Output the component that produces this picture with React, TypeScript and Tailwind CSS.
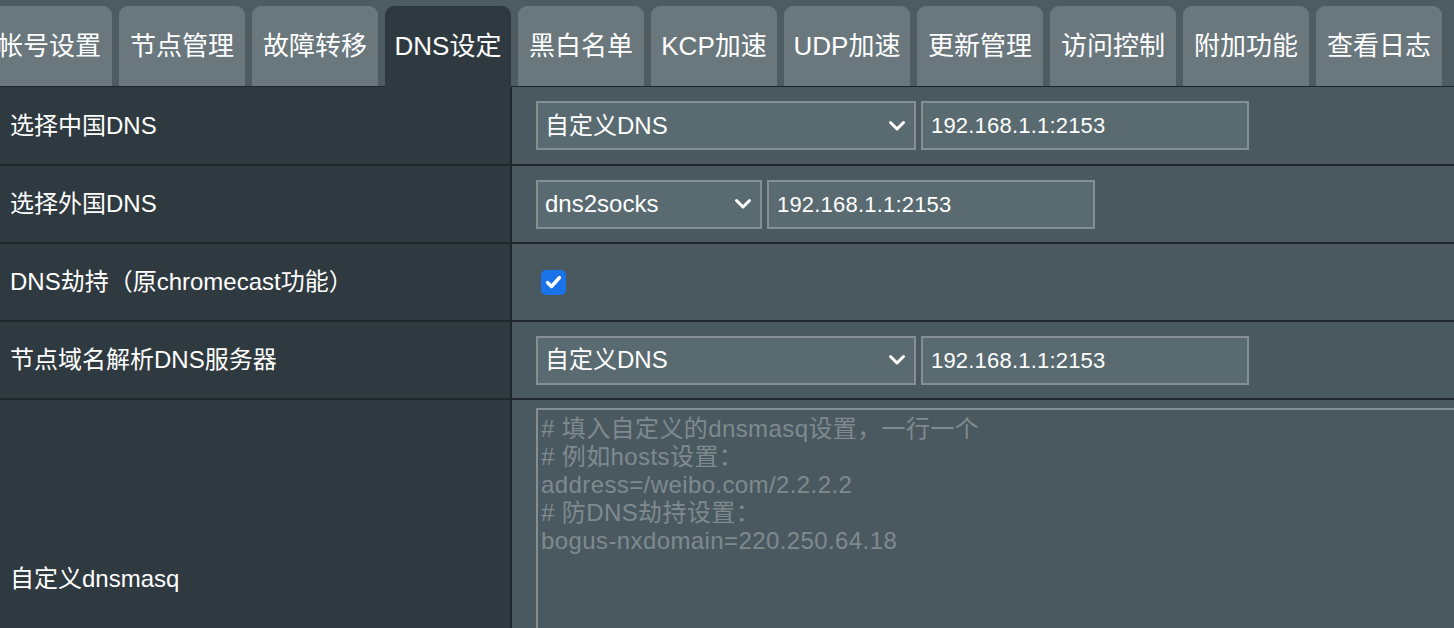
import React from "react";

const tabs = [
  "帐号设置",
  "节点管理",
  "故障转移",
  "DNS设定",
  "黑白名单",
  "KCP加速",
  "UDP加速",
  "更新管理",
  "访问控制",
  "附加功能",
  "查看日志",
];

const font = "font-['Liberation_Sans','Noto_Sans_CJK_SC',sans-serif]";

function Chevron() {
  return (
    <svg width="18" height="12" viewBox="0 0 18 12" className="shrink-0">
      <path d="M2.5 2.5 L9 9 L15.5 2.5" fill="none" stroke="white" strokeWidth="3" strokeLinecap="round" strokeLinejoin="round" />
    </svg>
  );
}

function Select({ value, width }: { value: string; width: string }) {
  return (
    <div
      className={`${width} h-[49px] flex items-center justify-between pl-[7px] pr-[8px] bg-[#596b71] border-2 border-[#858e91] text-white text-[24px]`}
    >
      <span>{value}</span>
      <Chevron />
    </div>
  );
}

function TextInput({ value }: { value: string }) {
  return (
    <div className="w-[328px] h-[49px] flex items-center pl-[8px] bg-[#596b71] border-2 border-[#858e91] text-white text-[22px] tracking-[0.2px]">
      {value}
    </div>
  );
}

function Row({ label, children, h }: { label: string; children: React.ReactNode; h: string }) {
  const tall = h === "h-[360px]";
  return (
    <div className={`flex border-b-2 border-[#1f2629] ${h}`}>
      <div className="w-[512px] shrink-0 flex items-center pl-[10px] bg-[#2f3a40] border-r-2 border-[#1f2629] text-white text-[24px]">
        {label}
      </div>
      <div className={`flex-1 flex ${tall ? "items-start pt-[8px]" : "items-center"} pl-[24px] gap-[5px] bg-[#4a5960]`}>
        {children}
      </div>
    </div>
  );
}

export default function App() {
  const placeholder = [
    "# 填入自定义的dnsmasq设置，一行一个",
    "# 例如hosts设置：",
    "address=/weibo.com/2.2.2.2",
    "# 防DNS劫持设置：",
    "bogus-nxdomain=220.250.64.18",
  ];
  return (
    <div className={`w-[1454px] h-[628px] overflow-hidden bg-[#4a5960] ${font}`}>
      <div className="h-[87px] bg-[#4e5b61] border-b border-[#1f2629] pt-[6px] overflow-visible">
        <div className="flex gap-[7px] ml-[-14px] h-[80px]">
          {tabs.map((t) => {
            const active = t === "DNS设定";
            return (
              <div
                key={t}
                className={`w-[126px] shrink-0 rounded-t-[9px] flex items-center justify-center text-white text-[26px] ${
                  active ? "bg-[#2f3a40] h-[82px] relative z-10 pb-[2px]" : "bg-[#6a787e] h-[80px]"
                }`}
              >
                {t}
              </div>
            );
          })}
        </div>
      </div>
      <Row label="选择中国DNS" h="h-[79px]">
        <Select value="自定义DNS" width="w-[380px]" />
        <TextInput value="192.168.1.1:2153" />
      </Row>
      <Row label="选择外国DNS" h="h-[78px]">
        <Select value="dns2socks" width="w-[226px]" />
        <TextInput value="192.168.1.1:2153" />
      </Row>
      <Row label="DNS劫持（原chromecast功能）" h="h-[78px]">
        <div className="ml-[5px] w-[25px] h-[25px] rounded-[5px] bg-[#1a73e8] flex items-center justify-center">
          <svg width="17" height="14" viewBox="0 0 17 14">
            <path d="M2.5 7.5 L6.5 11.5 L14.5 2.5" fill="none" stroke="white" strokeWidth="3.4" strokeLinecap="round" strokeLinejoin="round" />
          </svg>
        </div>
      </Row>
      <Row label="节点域名解析DNS服务器" h="h-[78px]">
        <Select value="自定义DNS" width="w-[380px]" />
        <TextInput value="192.168.1.1:2153" />
      </Row>
      <Row label="自定义dnsmasq" h="h-[360px]">
        <div className="w-[960px] h-[340px] border-2 border-[#858e91] pl-[3px] pt-[5px] text-[#7e8a8e] text-[24px] leading-[28px] tracking-[0.4px]">
          {placeholder.map((l) => (
            <div key={l}>{l}</div>
          ))}
        </div>
      </Row>
    </div>
  );
}
